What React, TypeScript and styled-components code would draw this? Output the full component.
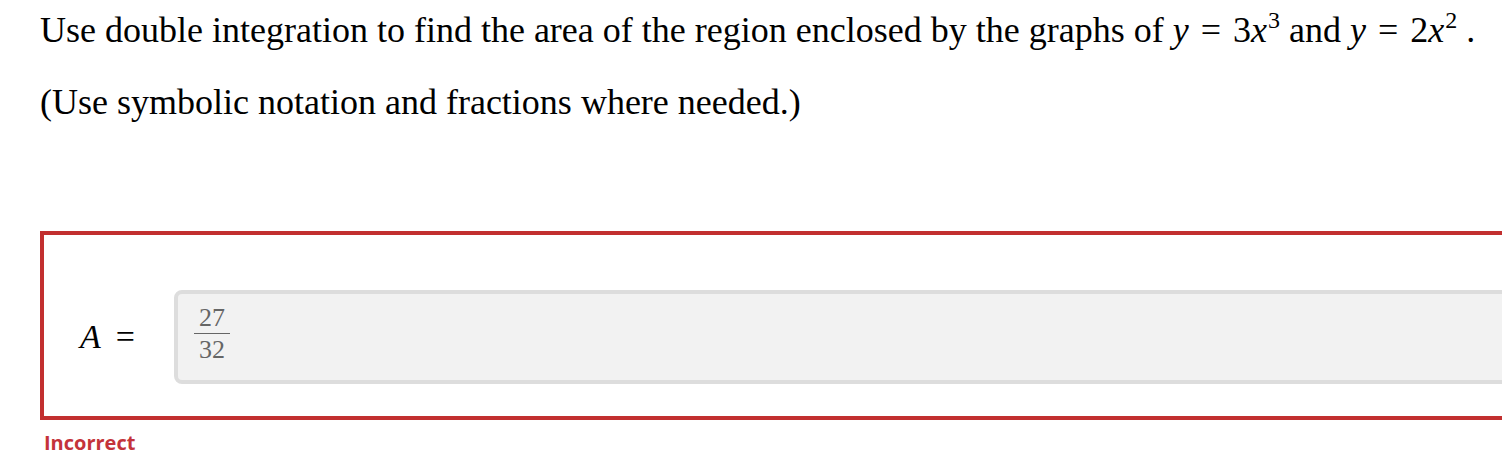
import React from "react";
import styled, { createGlobalStyle } from "styled-components";

const GlobalStyle = createGlobalStyle`
  html, body {
    margin: 0;
    padding: 0;
    background: #ffffff;
    overflow: hidden;
  }
  body {
    font-family: "Liberation Serif", "Times New Roman", serif;
    color: #000;
  }
`;

const Page = styled.div`
  padding: 6px 0 0 40px;
  width: 1502px;
  box-sizing: border-box;
`;

const Prompt = styled.p`
  margin: 0;
  font-size: 36px;
  line-height: 48px;
  white-space: nowrap;
`;

const Note = styled(Prompt)`
  margin-top: 24px;
`;

const Var = styled.span`
  font-style: italic;
`;

const Op = styled.span`
  margin: 0 12px;
`;

const Sup = styled.sup`
  font-size: 24px;
  line-height: 0;
  vertical-align: 14px;
  margin-left: 1px;
`;

const AnswerBox = styled.div<{ $status: "incorrect" | "correct" }>`
  margin-top: 105px;
  width: 1500px;
  height: 189px;
  box-sizing: border-box;
  border: 4px solid ${(p) => (p.$status === "incorrect" ? "#c22f2f" : "#2e8540")};
  display: flex;
  align-items: flex-start;
  padding: 55px 0 0 36px;
`;

const AnswerRow = styled.div`
  display: flex;
  align-items: center;
  height: 94px;
`;

const Label = styled.div`
  font-family: "Liberation Serif", "Times New Roman", serif;
  font-size: 34px;
  width: 94px;
  display: flex;
  align-items: center;
  white-space: nowrap;
`;

const LabelVar = styled.span`
  font-style: italic;
  margin-right: 13px;
  letter-spacing: 2px;
`;

const Field = styled.div`
  width: 1400px;
  height: 94px;
  box-sizing: border-box;
  border: 4px solid #dddddd;
  border-radius: 8px;
  background: #f2f2f2;
  display: flex;
  align-items: center;
  padding: 0 0 6px 16px;
`;

const Fraction = styled.span`
  display: inline-flex;
  flex-direction: column;
  align-items: center;
  color: #666666;
  font-family: "Liberation Serif", "Times New Roman", serif;
  font-size: 26px;
  line-height: 24px;
`;

const Numerator = styled.span`
  padding: 0 5px 3px;
  border-bottom: 1.5px solid #666666;
`;

const Denominator = styled.span`
  padding: 4px 5px 0;
`;

const Feedback = styled.div`
  margin-top: 9px;
  padding-left: 4px;
  font-family: "Open Sans", "Liberation Sans", sans-serif;
  font-weight: 700;
  font-size: 20px;
  color: #c4333a;
`;

export default function App() {
  return (
    <>
      <GlobalStyle />
      <Page>
        <Prompt>
          Use double integration to find the area of the region enclosed by the graphs of{" "}
          <Var>y</Var>
          <Op>=</Op>3<Var>x</Var>
          <Sup>3</Sup> and <Var>y</Var>
          <Op>=</Op>2<Var>x</Var>
          <Sup>2</Sup> .
        </Prompt>
        <Note>(Use symbolic notation and fractions where needed.)</Note>
        <AnswerBox $status="incorrect">
          <AnswerRow>
            <Label>
              <LabelVar>A</LabelVar>=
            </Label>
            <Field>
              <Fraction>
                <Numerator>27</Numerator>
                <Denominator>32</Denominator>
              </Fraction>
            </Field>
          </AnswerRow>
        </AnswerBox>
        <Feedback>Incorrect</Feedback>
      </Page>
    </>
  );
}
